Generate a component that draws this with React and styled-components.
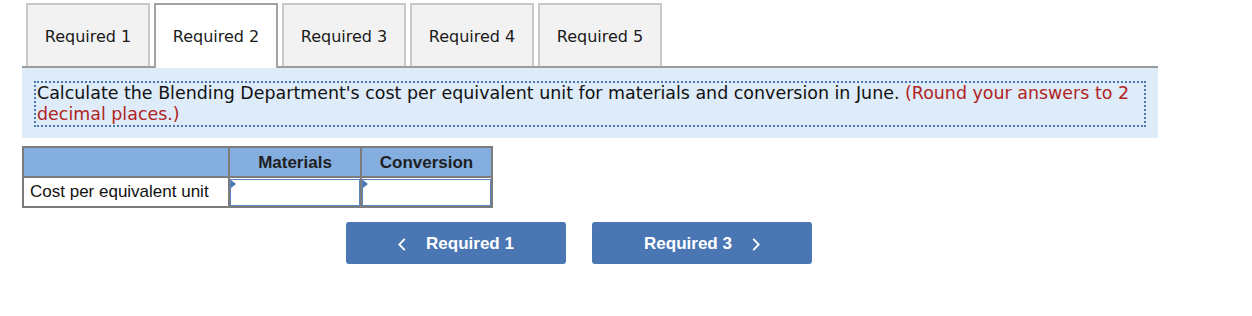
import React from 'react'
import styled, { createGlobalStyle } from 'styled-components';

const GlobalStyle = createGlobalStyle`
  body {
    margin: 0;
    background: #ffffff;
    font-family: "DejaVu Sans", Verdana, sans-serif;
  }
`;

const tabs = ['Required 1', 'Required 2', 'Required 3', 'Required 4', 'Required 5'];

function App() {
  return <Page>
    <GlobalStyle />
    <TabBar>
      {tabs.map((t, i) => (
        <Tab key={t} active={i === 1}>{t}</Tab>
      ))}
    </TabBar>
    <Panel>
      <Prompt>
        Calculate the Blending Department's cost per equivalent unit for materials and conversion in June.{' '}
        <Hint>(Round your answers to 2 decimal places.)</Hint>
      </Prompt>
    </Panel>
    <Grid>
      <thead>
        <tr>
          <HeadCell width={206}></HeadCell>
          <HeadCell width={132}>Materials</HeadCell>
          <HeadCell width={131}>Conversion</HeadCell>
        </tr>
      </thead>
      <tbody>
        <tr>
          <LabelCell>Cost per equivalent unit</LabelCell>
          <InputCell><Entry /></InputCell>
          <InputCell><Entry /></InputCell>
        </tr>
      </tbody>
    </Grid>
    <NavRow>
      <NavButton>
        <Chevron viewBox="0 0 8 14"><polyline points="7,1 1,7 7,13" /></Chevron>
        Required 1
      </NavButton>
      <NavButton>
        Required 3
        <Chevron viewBox="0 0 8 14"><polyline points="1,1 7,7 1,13" /></Chevron>
      </NavButton>
    </NavRow>
  </Page>
}

const Page = styled.div`
  width: 1136px;
  padding: 3px 0 0 22px;
`;

const TabBar = styled.div`
  display: flex;
  gap: 4px;
  padding-left: 4px;
  border-bottom: 2px solid #9b9b9b;
  height: 63px;
`;

const Tab = styled.div`
  box-sizing: border-box;
  width: 124px;
  height: ${p => (p.active ? '65px' : '63px')};
  display: flex;
  align-items: flex-start;
  justify-content: center;
  padding-top: 22px;
  border: 2px solid ${p => (p.active ? '#a3a3a3' : '#c9c9c9')};
  border-bottom: none;
  background: ${p => (p.active ? '#ffffff' : '#f2f2f2')};
  color: #1a1a1a;
  font-size: 16px;
  line-height: 20px;
  position: relative;
  z-index: 1;
`;

const Panel = styled.div`
  background: #deebf8;
  padding: 13px 12px 11px 12px;
`;

const Prompt = styled.div`
  border: 2px dotted #4a77b4;
  padding: 0 0 0 1px;
  font-size: 17.45px;
  line-height: 21px;
  color: #111;
`;

const Hint = styled.span`
  color: #b0231e;
`;

const Grid = styled.table`
  margin-top: 8px;
  border-collapse: collapse;
  border: 2px solid #7c7c7c;
  font-family: "Liberation Sans", Arial, sans-serif;
  font-size: 17px;
  line-height: 20px;
`;

const HeadCell = styled.th`
  box-sizing: border-box;
  width: ${p => p.width}px;
  height: 30px;
  padding: 2px 0 0 0;
  background: #84aee0;
  border: 2px solid #7c7c7c;
  color: #1f1f1f;
  font-weight: bold;
  text-align: center;
`;

const LabelCell = styled.td`
  box-sizing: border-box;
  height: 30px;
  padding: 0 6px;
  border: 2px solid #7c7c7c;
  color: #111;
  white-space: nowrap;
`;

const InputCell = styled.td`
  box-sizing: border-box;
  padding: 0;
  height: 30px;
  border: 2px solid #7c7c7c;
  background: #fff;
`;

const Entry = styled.div`
  position: relative;
  box-sizing: border-box;
  height: 27px;
  border: 1px solid #5a86c6;
  background: #fff;
  &::before {
    content: '';
    position: absolute;
    left: 0;
    top: 0;
    border-left: 5px solid #4a77b4;
    border-top: 4px solid transparent;
    border-bottom: 4px solid transparent;
  }
`;

const NavRow = styled.div`
  display: flex;
  gap: 26px;
  margin-top: 14px;
  padding-left: 324px;
`;

const NavButton = styled.button`
  width: 220px;
  height: 42px;
  display: flex;
  align-items: center;
  justify-content: center;
  gap: 20px;
  border: none;
  border-radius: 3px;
  background: #4a77b4;
  color: #fff;
  font-family: "Liberation Sans", Arial, sans-serif;
  font-weight: bold;
  font-size: 17px;
  padding: 2px 0 0 0;
`;

const Chevron = styled.svg`
  width: 8px;
  height: 13px;
  fill: none;
  stroke: #fff;
  stroke-width: 2;
`;

export default App;
